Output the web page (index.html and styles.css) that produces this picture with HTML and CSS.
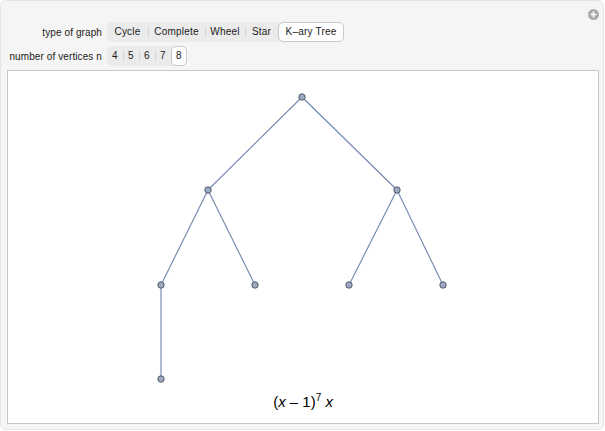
FILE: index.html
```html
<!DOCTYPE html>
<html>
<head>
<meta charset="utf-8">
<link rel="stylesheet" href="styles.css">
</head>
<body>
<div class="panel">
  <div class="plus"><svg width="11" height="11" viewBox="0 0 11 11"><circle cx="5.5" cy="5.5" r="5.5" fill="#a9a9a9"/><path d="M5.5 2.5v6M2.5 5.5h6" stroke="#fff" stroke-width="1.6"/></svg></div>
  <div class="controls">
    <div class="row">
      <div class="label">type of graph</div>
      <div class="seg">
        <span class="opt w1">Cycle</span><span class="opt w2">Complete</span><span class="opt w3">Wheel</span><span class="opt w4">Star</span><span class="opt sel w5">K‒ary Tree</span>
      </div>
    </div>
    <div class="row">
      <div class="label">number of vertices n</div>
      <div class="seg">
        <span class="opt n">4</span><span class="opt n">5</span><span class="opt n">6</span><span class="opt n">7</span><span class="opt sel n">8</span>
      </div>
    </div>
  </div>
  <div class="view">
    <svg class="graph" width="590" height="352" viewBox="7 71 590 352">
      <g stroke="#6f86ae" stroke-width="1.1" fill="none">
        <line x1="301" y1="97" x2="207" y2="190"/>
        <line x1="301" y1="97" x2="396" y2="190"/>
        <line x1="207" y1="190" x2="160" y2="285"/>
        <line x1="207" y1="190" x2="254" y2="285"/>
        <line x1="396" y1="190" x2="348" y2="285"/>
        <line x1="396" y1="190" x2="442" y2="285"/>
        <line x1="160" y1="285" x2="160" y2="379"/>
      </g>
      <g fill="#9caac4" stroke="#4a4f5a" stroke-width="0.9">
        <circle cx="301" cy="97" r="3.2"/>
        <circle cx="207" cy="190" r="3.2"/>
        <circle cx="396" cy="190" r="3.2"/>
        <circle cx="160" cy="285" r="3.2"/>
        <circle cx="254" cy="285" r="3.2"/>
        <circle cx="348" cy="285" r="3.2"/>
        <circle cx="442" cy="285" r="3.2"/>
        <circle cx="160" cy="379" r="3.2"/>
      </g>
    </svg>
    <div class="formula">(<i>x</i> – 1)<sup>7</sup> <i>x</i></div>
  </div>
</div>
</body>
</html>
```
FILE: styles.css
```css
html, body {
  margin: 0;
  padding: 0;
  background: #ffffff;
}
body {
  width: 605px;
  height: 431px;
  overflow: hidden;
  font-family: "Liberation Sans", Arial, sans-serif;
}
.panel {
  position: relative;
  box-sizing: border-box;
  width: 604px;
  height: 430px;
  background: #f5f5f5;
  border: 1px solid #e4e4e4;
  border-radius: 6px;
  padding: 21px 6px 0 6px;
}
.plus {
  position: absolute;
  left: 587px;
  top: 8px;
  width: 11px;
  height: 11px;
  line-height: 0;
}
.controls {
  display: flex;
  flex-direction: column;
  gap: 4px;
}
.row {
  display: flex;
  align-items: center;
  height: 20px;
}
.label {
  width: 100px;
  flex: none;
  display: flex;
  justify-content: flex-end;
  white-space: nowrap;
  font-size: 10px;
  letter-spacing: 0.1px;
  color: #1a1a1a;
  padding-right: 5px;
  box-sizing: border-box;
}
.seg {
  display: flex;
  height: 20px;
  background: #ebebeb;
  border-radius: 5px;
  align-items: center;
}
.opt {
  font-size: 10px;
  letter-spacing: 0.2px;
  color: #1a1a1a;
  text-align: center;
  height: 20px;
  line-height: 20px;
  box-sizing: border-box;
  position: relative;
}
.opt + .opt::before {
  content: "";
  position: absolute;
  left: 0;
  top: 5px;
  height: 10px;
  border-left: 1px solid #d6d6d6;
}
.opt.sel {
  background: #ffffff;
  border: 1px solid #c9c9c9;
  border-radius: 5px;
  line-height: 18px;
}
.opt.sel::before, .opt.sel + .opt::before {
  display: none;
}
.w1 { width: 41px; }
.w2 { width: 57px; }
.w3 { width: 40px; }
.w4 { width: 33px; }
.w5 { width: 66px; }
.n { width: 16px; }
.view {
  margin-top: 4px;
  box-sizing: border-box;
  width: 592px;
  height: 354px;
  background: #ffffff;
  border: 1px solid #c6c6c6;
  position: relative;
}
.graph {
  display: block;
}
.formula {
  position: absolute;
  left: 0;
  right: 0;
  top: 322px;
  text-align: center;
  font-size: 15px;
  color: #000;
}
.formula sup {
  font-size: 10px;
  vertical-align: 6px;
  line-height: 0;
}
```
